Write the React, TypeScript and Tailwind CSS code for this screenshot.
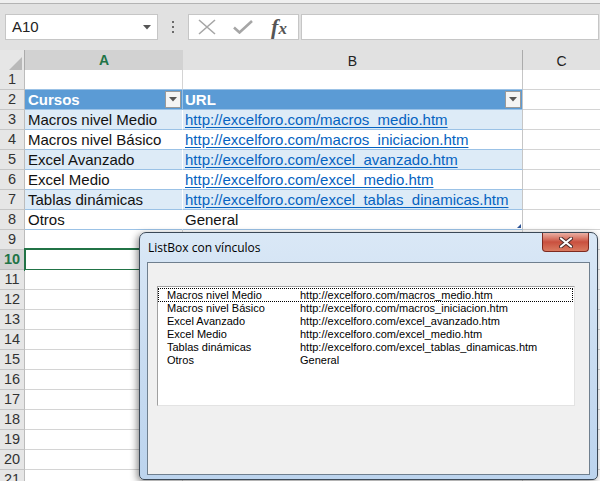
import React from "react";

type Kind = "blank" | "row1" | "head" | "band" | "white" | "whiteLast";

const tableRows: { a: string; b: string; kind: Kind; link?: boolean }[] = [
  { a: "", b: "", kind: "row1" },
  { a: "Cursos", b: "URL", kind: "head" },
  { a: "Macros nivel Medio", b: "http://excelforo.com/macros_medio.htm", kind: "band", link: true },
  { a: "Macros nivel Básico", b: "http://excelforo.com/macros_iniciacion.htm", kind: "white", link: true },
  { a: "Excel Avanzado", b: "http://excelforo.com/excel_avanzado.htm", kind: "band", link: true },
  { a: "Excel Medio", b: "http://excelforo.com/excel_medio.htm", kind: "white", link: true },
  { a: "Tablas dinámicas", b: "http://excelforo.com/excel_tablas_dinamicas.htm", kind: "band", link: true },
  { a: "Otros", b: "General", kind: "whiteLast" },
];

const listItems = [
  ["Macros nivel Medio", "http://excelforo.com/macros_medio.htm"],
  ["Macros nivel Básico", "http://excelforo.com/macros_iniciacion.htm"],
  ["Excel Avanzado", "http://excelforo.com/excel_avanzado.htm"],
  ["Excel Medio", "http://excelforo.com/excel_medio.htm"],
  ["Tablas dinámicas", "http://excelforo.com/excel_tablas_dinamicas.htm"],
  ["Otros", "General"],
];

function FilterBtn() {
  return (
    <div className="w-[16px] h-[17px] bg-[#f4f4f4] border border-[#9a9a9a] flex items-center justify-center">
      <svg width="8" height="5" viewBox="0 0 8 5">
        <path d="M0 0 H8 L4 4.5 Z" fill="#555" />
      </svg>
    </div>
  );
}

function RowHeader({ n, selected }: { n: number; selected?: boolean }) {
  return (
    <div
      className={
        "h-[20px] border-b border-r flex items-center justify-center text-[14.5px] " +
        (selected
          ? "bg-[#d2d2d2] border-b-[#bcbcbc] border-r-[#217346] text-[#217346] font-bold"
          : "bg-[#e6e6e6] border-b-[#c6c6c6] border-r-[#bcbcbc] text-[#333]")
      }
    >
      {n}
    </div>
  );
}

export default function App() {
  return (
    <div
      className="relative w-[600px] h-[481px] overflow-hidden bg-white"
      style={{ fontFamily: '"Liberation Sans", Arial, sans-serif' }}
    >
      {/* top strip */}
      <div className="h-[4px] bg-[#efefef] border-b border-[#b3b3b3]" />
      {/* formula bar */}
      <div className="h-[46px] bg-[#e1e1e1] flex items-start pt-[10px]">
        <div className="ml-[5px] w-[153px] h-[26px] bg-white border border-[#c6c6c6] flex items-center justify-between pl-[6px] pr-[6px]">
          <span className="text-[15px] text-[#222]">A10</span>
          <svg width="8" height="5" viewBox="0 0 8 5">
            <path d="M0 0 H8 L4 4.5 Z" fill="#555" />
          </svg>
        </div>
        <div className="w-[30px] h-[26px] flex flex-col items-center justify-center gap-[3px]">
          <div className="w-[2px] h-[2px] bg-[#6a6a6a]" />
          <div className="w-[2px] h-[2px] bg-[#6a6a6a]" />
          <div className="w-[2px] h-[2px] bg-[#6a6a6a]" />
        </div>
        <div className="w-[111px] h-[26px] bg-white border border-[#c6c6c6] flex items-center">
          <div className="w-[36px] flex justify-center">
            <svg width="18" height="16" viewBox="0 0 18 16">
              <path d="M1 1 L17 15 M17 1 L1 15" stroke="#a6a6a6" strokeWidth="1.6" fill="none" />
            </svg>
          </div>
          <div className="w-[36px] flex justify-center">
            <svg width="20" height="14" viewBox="0 0 20 14">
              <path d="M1 7.5 L6.5 12.5 L19 1" stroke="#a6a6a6" strokeWidth="2.6" fill="none" />
            </svg>
          </div>
          <div className="w-[36px] flex justify-center">
            <span
              className="italic font-bold text-[#555] leading-none"
              style={{ fontFamily: '"Liberation Serif", "Times New Roman", serif' }}
            >
              <span className="text-[22px]">f</span>
              <span className="text-[17px]">x</span>
            </span>
          </div>
        </div>
        <div className="ml-[2px] w-[298px] h-[26px] bg-white border border-[#c6c6c6]" />
      </div>

      {/* column headers */}
      <div className="grid grid-cols-[25px_158px_340px_77px] h-[20px] bg-[#e1e1e1]">
        <div className="border-r border-b border-[#ababab] bg-[#e6e6e6] flex items-end justify-end pr-[2px] pb-[2px]">
          <svg width="13" height="13" viewBox="0 0 13 13">
            <path d="M13 0 V13 H0 Z" fill="#b9b9b9" />
          </svg>
        </div>
        <div className="bg-[#d2d2d2] border-b-2 border-[#217346] flex items-center justify-center text-[14px] font-bold text-[#217346]">
          A
        </div>
        <div className="border-r border-b border-[#ababab] flex items-center justify-center text-[14px] text-[#222]">
          B
        </div>
        <div className="border-b border-[#ababab] flex items-center justify-center text-[14px] text-[#222]">
          C
        </div>
      </div>

      {/* sheet rows */}
      <div className="grid grid-cols-[25px_158px_340px_77px]">
        {tableRows.map((r, i) => {
          const n = i + 1;
          const head = r.kind === "head";
          const band = r.kind === "band";
          const bg = head ? "bg-[#5b9bd5]" : band ? "bg-[#ddebf7]" : "bg-white";
          const bBottom = "border-b-[#9bc2e6]";
          const aRight = r.kind === "row1" ? "border-r-[#d4d4d4]" : head ? "border-r-[#9bc2e6]" : "border-r-[#ffffff]";
          const txt = head ? "text-white font-bold" : "text-[#111]";
          return (
            <React.Fragment key={n}>
              <RowHeader n={n} />
              <div className={`h-[20px] border-b border-r ${bBottom} ${aRight} ${bg} ${txt} text-[15px] pl-[3px] pr-[1px] flex items-end justify-between leading-[19px] whitespace-nowrap`}>
                <span>{r.a}</span>
                {head && (
                  <div className="self-center">
                    <FilterBtn />
                  </div>
                )}
              </div>
              <div className={`relative h-[20px] border-b border-r ${bBottom} border-r-[#c6c6c6] ${bg} ${txt} text-[15px] pl-[2px] pr-[1px] flex items-end justify-between leading-[19px] whitespace-nowrap`}>
                <span className={r.link ? "text-[#0563c1] underline underline-offset-[2px]" : ""}>{r.b}</span>
                {head && (
                  <div className="self-center">
                    <FilterBtn />
                  </div>
                )}
                {r.kind === "whiteLast" && (
                  <svg className="absolute right-[1px] bottom-[1px]" width="4" height="4" viewBox="0 0 4 4">
                    <path d="M4 0 V4 H0 Z" fill="#2f5597" />
                  </svg>
                )}
              </div>
              <div className="h-[20px] border-b border-[#d4d4d4] bg-white" />
            </React.Fragment>
          );
        })}
        {Array.from({ length: 13 }, (_, k) => k + 9).map((n) => (
          <React.Fragment key={n}>
            <RowHeader n={n} selected={n === 10} />
            <div className="relative h-[20px] border-b border-r border-[#d4d4d4] bg-white">
              {n === 10 && <div className="absolute -left-[1px] -top-[2px] -right-[1px] -bottom-[2px] border-2 border-[#217346]" />}
            </div>
            <div className="h-[20px] border-b border-r border-[#d4d4d4] bg-white" />
            <div className="h-[20px] border-b border-[#d4d4d4] bg-white" />
          </React.Fragment>
        ))}
      </div>

      {/* dialog window */}
      <div className="absolute left-[139px] top-[232px] w-[459px] h-[248px] rounded-t-[7px] rounded-b-[5px] border border-[#3b4856] bg-linear-to-b from-[#dae8f6] via-[#c9dcf1] to-[#bcd4ee] shadow-[-2px_2px_7px_rgba(0,0,0,0.45)] flex flex-col">
        <div className="h-[29px] flex items-center pl-[8px] pt-[1px]">
          <span className="text-[12px] text-black" style={{ fontFamily: '"Open Sans", "Liberation Sans", sans-serif' }}>
            ListBox con vínculos
          </span>
        </div>
        <div className="absolute top-0 right-[8px] w-[47px] h-[19px] rounded-b-[4px] border border-t-0 border-[#7d2a20] bg-linear-to-b from-[#eab0a4] via-[#c9503f] to-[#d97a60] flex items-center justify-center">
          <svg width="14" height="11" viewBox="0 0 14 11">
            <path d="M2 1.5 L12 9.5 M12 1.5 L2 9.5" stroke="#4a2a28" strokeWidth="4" strokeLinecap="round" fill="none" />
            <path d="M2 1.5 L12 9.5 M12 1.5 L2 9.5" stroke="#ffffff" strokeWidth="2.2" strokeLinecap="round" fill="none" />
          </svg>
        </div>
        <div className="mx-[7px] h-[213px] border border-[#6f7f8e] bg-[#f0f0f0] pl-[9px] pt-[23px]">
          <div
            className="w-[418px] h-[120px] bg-white border border-t-[#a0a0a0] border-l-[#a0a0a0] border-r-[#e3e3e3] border-b-[#e3e3e3] pt-[1px] text-[11px] text-black"
            style={{ fontFamily: '"Liberation Sans", Arial, sans-serif' }}
          >
            {listItems.map((it, i) => (
              <div
                key={i}
                className={
                  "flex items-center whitespace-nowrap mr-[1px] " +
                  (i === 0 ? "h-[14px] border border-dotted border-black pl-[8px]" : "h-[13px] pl-[9px]")
                }
              >
                <span className="w-[133px]">{it[0]}</span>
                <span>{it[1]}</span>
              </div>
            ))}
          </div>
        </div>
      </div>
    </div>
  );
}
